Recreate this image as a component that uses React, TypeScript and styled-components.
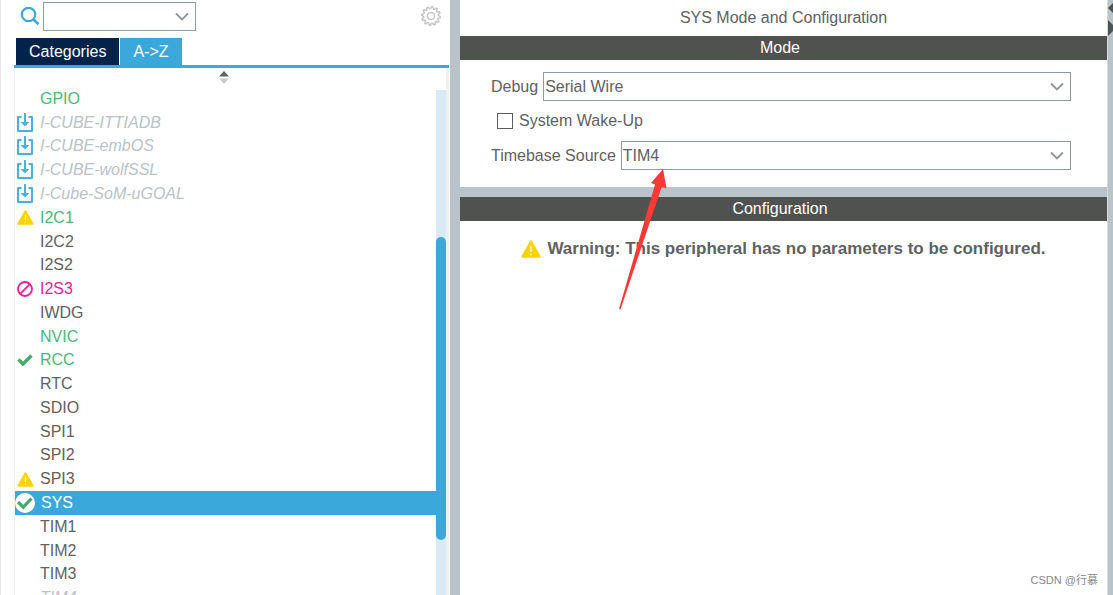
import React from "react";
import styled, { createGlobalStyle, css } from "styled-components";

const GlobalStyle = createGlobalStyle`
  *, *::before, *::after { box-sizing: border-box; }
  html, body, #root { height: 100%; }
  body {
    margin: 0;
    overflow: hidden;
    background: #ffffff;
    color: #5f6163;
    font-family: "Liberation Sans", Arial, sans-serif;
    font-size: 16px;
    line-height: 20px;
  }
  button, select, input { font: inherit; color: inherit; }
`;

const blue = "#3ba8dc";
const steel = "#b8c4ca";

type Tone = "normal" | "green" | "pink" | "muted" | "selected";
type Status = "download" | "warning" | "blocked" | "check" | "checkRound";

const tones: Record<Tone, string> = {
  normal: "#5f6163",
  green: "#4cb877",
  pink: "#f01c98",
  muted: "#b8c2c9",
  selected: "#ffffff",
};

const Screen = styled.div`
  display: flex;
  height: 100vh;
  min-height: 400px;
  overflow: hidden;
`;

const Sidebar = styled.aside`
  display: flex;
  flex: 0 0 450px;
  flex-direction: column;
  padding: 1px 1px 0 13px;
  border-left: 1px solid #e4e6e8;
  min-width: 0;
`;

const SearchRow = styled.div`
  display: flex;
  align-items: center;
  padding: 0 7px 0 6px;
  height: 30px;
`;

const SearchIcon = styled.svg`
  width: 20px;
  height: 20px;
  margin: 0 3px 0 0;
`;

const GearButton = styled.button`
  display: flex;
  margin-left: auto;
  padding: 0;
  border: 0;
  background: none;
`;

const SelectBox = styled.div<{ $width?: string }>`
  position: relative;
  flex: ${(p) => (p.$width ? `0 0 ${p.$width}` : "1 1 0")};
  height: 29px;

  svg {
    position: absolute;
    top: 9px;
    right: 7px;
    pointer-events: none;
  }
`;

const NativeSelect = styled.select`
  display: block;
  width: 100%;
  height: 100%;
  padding: 0 28px 0 1px;
  border: 1px solid #8f999f;
  border-radius: 0;
  background: #ffffff;
  appearance: none;
`;

const Tabs = styled.div`
  display: flex;
  gap: 1px;
  margin-top: 7px;
  padding-left: 2px;
  border-bottom: 3px solid ${blue};
`;

const Tab = styled.button<{ $active?: boolean }>`
  height: 27px;
  padding: 0 13px;
  border: 0;
  background: ${(p) => (p.$active ? blue : "#03234b")};
  color: #ffffff;
`;

const ListPanel = styled.div`
  display: flex;
  flex: 1;
  flex-direction: column;
  min-height: 0;
  border: solid #eef0f2;
  border-width: 0 3px 0 1px;
`;

const SortButton = styled.button`
  display: flex;
  justify-content: center;
  align-items: center;
  flex: none;
  height: 19px;
  padding: 0 13px 0 0;
  border: 0;
  background: none;
`;

const ListBody = styled.div`
  display: flex;
  flex: 1;
  min-height: 0;
`;

const List = styled.ul`
  display: grid;
  flex: 1;
  grid-template-rows: repeat(22, 1fr);
  height: 523px;
  margin: 0;
  padding: 0;
  list-style: none;
`;

const Row = styled.li<{ $tone: Tone }>`
  display: flex;
  align-items: center;
  gap: 5px;
  min-height: 0;
  color: ${(p) => tones[p.$tone]};
  ${(p) => p.$tone === "muted" && css`font-style: italic;`}
  ${(p) => p.$tone === "selected" && css`
    gap: 6px;
    background: ${blue};
  `}
`;

const StatusSlot = styled.span`
  display: flex;
  justify-content: center;
  flex: 0 0 20px;
`;

const Track = styled.div`
  flex: 0 0 10px;
  margin-top: 3px;
  padding-top: 147px;
  background: #d9e9f6;
`;

const Thumb = styled.div`
  height: 303px;
  border-radius: 5px;
  background: ${blue};
`;

const Splitter = styled.div`
  flex: 0 0 10px;
  background: ${steel};
`;

const EdgeSplitter = styled.div`
  flex: 0 0 6px;
  overflow: hidden;
  background: ${steel};
  border-left: 1px solid #d3dbdf;
`;

const Main = styled.main`
  position: relative;
  display: flex;
  flex: 1;
  flex-direction: column;
  min-width: 0;
`;

const Title = styled.h1`
  margin: 0;
  padding: 8px 0;
  font-size: 16px;
  font-weight: 400;
  text-align: center;
`;

const SectionBar = styled.h2`
  margin: 0;
  padding: 2px 7px 2px 0;
  background: #50524f;
  color: #ffffff;
  font-size: 16px;
  font-weight: 400;
  text-align: center;
`;

const Form = styled.form`
  padding: 12px 36px 17px 31px;
`;

const Field = styled.div`
  display: flex;
  align-items: center;
  gap: 5px;
`;

const CheckField = styled.label`
  display: flex;
  align-items: center;
  gap: 6px;
  height: 40px;
  padding-left: 6px;
`;

const Checkbox = styled.input`
  width: 16px;
  height: 16px;
  margin: 0;
  border: 1px solid #5a5c5e;
  background: #ffffff;
  appearance: none;

  &:checked { background: ${blue}; }
`;

const Rule = styled.div`
  height: 10px;
  background: ${steel};
`;

const Warning = styled.p`
  display: flex;
  align-items: center;
  justify-content: center;
  gap: 6px;
  margin: 0;
  padding-top: 18px;
  font-size: 17px;
  font-weight: 700;
`;

const Arrow = styled.svg`
  position: absolute;
  top: 168px;
  left: 158px;
  pointer-events: none;
`;

const Watermark = styled.span`
  position: absolute;
  right: 9px;
  bottom: 5px;
  color: #86888a;
  font-family: "Liberation Sans", "Noto Sans CJK SC", sans-serif;
  font-size: 11px;
`;

const Chevron = () => (
  <svg width="14" height="11" viewBox="0 0 14 11" fill="none" stroke="#929598" strokeWidth="1.8">
    <path d="M1 2.5 L7 8.5 L13 2.5" />
  </svg>
);

const WarningIcon = ({ size }: { size: number }) => (
  <svg width={size} height={size - 2} viewBox="0 0 20 18">
    <path d="M10 1.5 L18.5 16.5 H1.5 Z" fill="#ffd200" stroke="#ffd200" strokeWidth="2.4" strokeLinejoin="round" />
    <path d="M10 6 V12" stroke="#fff8d0" strokeWidth="1.6" />
    <path d="M10 13.6 V15.4" stroke="#fff8d0" strokeWidth="1.6" />
  </svg>
);

const StatusIcon = ({ status }: { status?: Status }) => {
  switch (status) {
    case "download":
      return (
        <svg width="18" height="20" viewBox="0 0 18 20" fill="none" stroke="#4bb0e0" strokeWidth="2">
          <path d="M5.5 4 H2 V18 H16 V4 H12.5" strokeLinejoin="round" />
          <path d="M9 0 V12" />
          <path d="M4.5 9 H13.5 L9 13.5 Z" fill="#4bb0e0" stroke="none" />
        </svg>
      );
    case "warning":
      return <WarningIcon size={17} />;
    case "blocked":
      return (
        <svg width="16" height="16" viewBox="0 0 16 16" fill="none" stroke="#f01c98" strokeWidth="1.8">
          <circle cx="8" cy="8" r="7" />
          <path d="M3.2 12.8 L12.8 3.2" />
        </svg>
      );
    case "check":
      return (
        <svg width="16" height="14" viewBox="0 0 16 14" fill="none" stroke="#46ab6c" strokeWidth="3.4">
          <path d="M1.5 6.5 L6 11 L14.5 2.5" />
        </svg>
      );
    case "checkRound":
      return (
        <svg width="20" height="20" viewBox="0 0 20 20" fill="none">
          <circle cx="10" cy="10" r="10" fill="#ffffff" />
          <path d="M3 9 L8.3 14.2 L16.5 5.5" stroke="#46ab6c" strokeWidth="3.2" />
        </svg>
      );
    default:
      return null;
  }
};

const gearPath = Array.from({ length: 48 }, (_, i) => {
  const angle = (i / 48) * Math.PI * 2 + Math.PI / 48;
  const radius = i % 4 < 2 ? 9.4 : 7.4;
  return `${i ? "L" : "M"}${(11 + radius * Math.sin(angle)).toFixed(2)} ${(11 - radius * Math.cos(angle)).toFixed(2)}`;
}).join(" ") + " Z";

const items: { name: string; tone: Tone; status?: Status }[] = [
  { name: "GPIO", tone: "green" },
  { name: "I-CUBE-ITTIADB", tone: "muted", status: "download" },
  { name: "I-CUBE-embOS", tone: "muted", status: "download" },
  { name: "I-CUBE-wolfSSL", tone: "muted", status: "download" },
  { name: "I-Cube-SoM-uGOAL", tone: "muted", status: "download" },
  { name: "I2C1", tone: "green", status: "warning" },
  { name: "I2C2", tone: "normal" },
  { name: "I2S2", tone: "normal" },
  { name: "I2S3", tone: "pink", status: "blocked" },
  { name: "IWDG", tone: "normal" },
  { name: "NVIC", tone: "green" },
  { name: "RCC", tone: "green", status: "check" },
  { name: "RTC", tone: "normal" },
  { name: "SDIO", tone: "normal" },
  { name: "SPI1", tone: "normal" },
  { name: "SPI2", tone: "normal" },
  { name: "SPI3", tone: "normal", status: "warning" },
  { name: "SYS", tone: "selected", status: "checkRound" },
  { name: "TIM1", tone: "normal" },
  { name: "TIM2", tone: "normal" },
  { name: "TIM3", tone: "normal" },
  { name: "TIM4", tone: "muted" },
];

export default function App() {
  return (
    <Screen>
      <GlobalStyle />
      <Sidebar>
        <SearchRow>
          <SearchIcon viewBox="0 0 20 20" fill="none" stroke={blue} strokeWidth="2.2">
            <circle cx="8.5" cy="8.5" r="6.7" />
            <path d="M13.3 13.3 L18.5 18.2" strokeWidth="2.6" />
          </SearchIcon>
          <SelectBox $width="153px">
            <NativeSelect aria-label="Search peripherals" defaultValue="">
              <option value="" />
            </NativeSelect>
            <Chevron />
          </SelectBox>
          <GearButton type="button" aria-label="Settings">
            <svg width="22" height="22" viewBox="0 0 22 22" fill="none" stroke="#c4c6c8" strokeWidth="1.5" strokeLinejoin="round">
              <path d={gearPath} />
              <circle cx="11" cy="11" r="3.6" />
            </svg>
          </GearButton>
        </SearchRow>
        <Tabs>
          <Tab type="button">Categories</Tab>
          <Tab type="button" $active>A-&gt;Z</Tab>
        </Tabs>
        <ListPanel>
          <SortButton type="button" aria-label="Sort">
            <svg width="10" height="13" viewBox="0 0 10 13">
              <path d="M5 0 L10 5.5 H0 Z" fill="#5f6163" />
              <path d="M0 7.5 H10 L5 13 Z" fill="#c8cacc" />
            </svg>
          </SortButton>
          <ListBody>
            <List>
              {items.map((item) => (
                <Row key={item.name} $tone={item.tone}>
                  <StatusSlot>
                    <StatusIcon status={item.status} />
                  </StatusSlot>
                  {item.name}
                </Row>
              ))}
            </List>
            <Track>
              <Thumb />
            </Track>
          </ListBody>
        </ListPanel>
      </Sidebar>
      <Splitter />
      <Main>
        <Title>SYS Mode and Configuration</Title>
        <SectionBar>Mode</SectionBar>
        <Form>
          <Field>
            <label htmlFor="debug">Debug</label>
            <SelectBox>
              <NativeSelect id="debug">
                <option>Serial Wire</option>
              </NativeSelect>
              <Chevron />
            </SelectBox>
          </Field>
          <CheckField>
            <Checkbox type="checkbox" />
            System Wake-Up
          </CheckField>
          <Field>
            <label htmlFor="timebase">Timebase Source</label>
            <SelectBox>
              <NativeSelect id="timebase">
                <option>TIM4</option>
              </NativeSelect>
              <Chevron />
            </SelectBox>
          </Field>
        </Form>
        <Rule />
        <SectionBar>Configuration</SectionBar>
        <Warning>
          <WarningIcon size={20} />
          Warning: This peripheral has no parameters to be configured.
        </Warning>
        <Arrow width="50" height="144" viewBox="0 0 50 144">
          <path d="M45 1 L48.5 20 L43.5 19.5 L2.5 141.5 L1 141 L37 16.5 L33 15 Z" fill="#fb3a35" />
        </Arrow>
        <Watermark>CSDN @行慕</Watermark>
      </Main>
      <EdgeSplitter>
        <svg width="6" height="38" viewBox="0 0 6 38" fill="#4e5254">
          <path d="M0 8 L6 2 V14 Z" />
          <path d="M0 20 L8 28 L0 36 Z" />
        </svg>
      </EdgeSplitter>
    </Screen>
  );
}
